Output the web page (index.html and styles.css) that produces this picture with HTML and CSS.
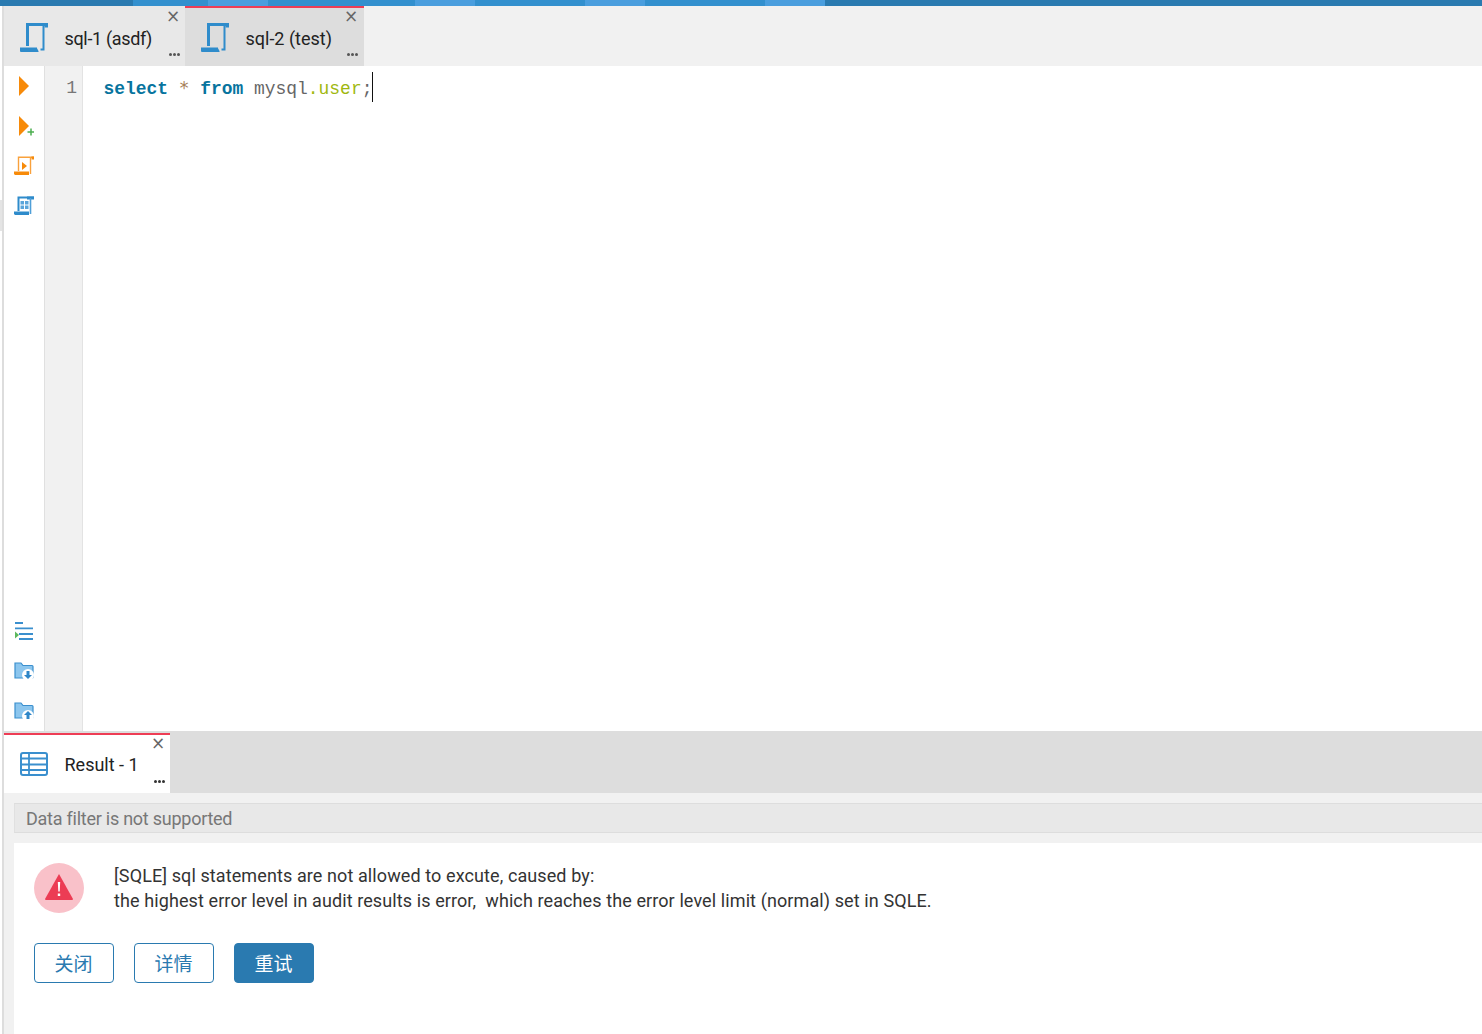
FILE: index.html
```html
<!DOCTYPE html>
<html lang="en">
<head>
<meta charset="utf-8">
<title>SQL</title>
<link rel="stylesheet" href="styles.css">
</head>
<body>
<svg class="defs" width="0" height="0">
  <symbol id="script" viewBox="0 0 28 30">
    <path d="M7.500 24V2.500H27" fill="none" stroke="currentColor" stroke-width="3"/>
    <path d="M24.500 1h3.500v4.500h-3.500z" fill="currentColor"/>
    <path d="M23.500 3v24.500h-3" fill="none" stroke="currentColor" stroke-width="2"/>
    <path d="M0 25.500h17v.8l1.500 2.700V30H1a1 1 0 0 1-1-1z" fill="currentColor"/>
  </symbol>
</svg>

<div class="topbar">
  <i class="seg dark"></i><i class="seg mid"></i><i class="seg light"></i><i class="seg mid"></i><i class="seg light"></i><i class="seg mid"></i><i class="seg light"></i><i class="seg mid"></i><i class="seg light"></i><i class="seg dark"></i>
</div>
<div class="edge-mark"></div>

<div class="app">
  <div class="tabs">
    <div class="tab tab-one">
      <svg class="tab-icon"><use href="#script"/></svg>
      <span class="tab-label">sql-1 (asdf)</span>
      <span class="close">×</span>
      <span class="more"><b></b><b></b><b></b></span>
    </div>
    <div class="tab tab-two">
      <svg class="tab-icon"><use href="#script"/></svg>
      <span class="tab-label">sql-2 (test)</span>
      <span class="close">×</span>
      <span class="more"><b></b><b></b><b></b></span>
    </div>
  </div>

  <div class="editor">
    <div class="tools">
      <div class="tool-group">
        <svg class="tool" viewBox="0 0 20 20"><path d="M5 0l10 10L5 20z" fill="#f78a09"/></svg>
        <svg class="tool" viewBox="0 0 20 20"><path d="M5 0l10 10L5 20z" fill="#f78a09"/><path d="M17 12.500v7M13.500 16h7" stroke="#4caf50" stroke-width="1.500" fill="none"/></svg>
        <svg class="tool" viewBox="0 0 20 20">
          <path d="M4.500 15V1.200H20" fill="none" stroke="#f9a13c" stroke-width="1.400"/>
          <path d="M17.500.5h2.700v3h-2.700z" fill="#f78a09"/>
          <path d="M16.500 2v16" fill="none" stroke="#f9a13c" stroke-width="1.400"/>
          <path d="M0 15.500h15v3.500H1l-1-1z" fill="#f78a09"/>
          <path d="M8 6l5 4-5 4z" fill="#f78a09"/>
        </svg>
        <svg class="tool" viewBox="0 0 20 20">
          <path d="M4.500 15V1.500H20" fill="none" stroke="#2e8bcb" stroke-width="2"/>
          <path d="M13 .5h7.200v3H13z" fill="#2e8bcb"/>
          <path d="M16.500 2v16" fill="none" stroke="#4f9fd8" stroke-width="1.600"/>
          <path d="M0 15.500h15v3.500H1l-1-1z" fill="#2e8bcb"/>
          <path d="M6.500 5h3.500v3.500H6.500zM11 5h3.500v3.500H11zM6.500 9.500h3.500v3.500H6.500zM11 9.500h3.500v3.500H11z" fill="#5aa5da"/>
        </svg>
      </div>
      <div class="tool-group">
        <svg class="tool" viewBox="0 0 20 20">
          <path d="M1 2h8M1 7.300h18M5 13h14M5 18h14" stroke="#3a8fce" stroke-width="1.800" fill="none"/>
          <path d="M1 10.500l4 3.500-4 3.500z" fill="#5cb85c"/>
        </svg>
        <svg class="tool" viewBox="0 0 20 20">
          <path d="M1 2h6l2 2.500h9a1 1 0 0 1 1 1V16a1 1 0 0 1-1 1H1z" fill="#8cc6ee" stroke="#3a8fce" stroke-width="1.200"/>
          <circle cx="14" cy="14" r="6" fill="#fff"/>
          <path d="M12.500 10h3v4H18l-4 4-4-4h2.500z" fill="#2e86c8"/>
        </svg>
        <svg class="tool" viewBox="0 0 20 20">
          <path d="M1 2h6l2 2.500h9a1 1 0 0 1 1 1V16a1 1 0 0 1-1 1H1z" fill="#8cc6ee" stroke="#3a8fce" stroke-width="1.200"/>
          <circle cx="14" cy="15" r="6" fill="#fff"/>
          <path d="M14 10l4 4h-2.500v4h-3v-4H10z" fill="#2e86c8"/>
        </svg>
      </div>
    </div>
    <div class="gutter">1</div>
    <div class="code"><span class="kw">select</span> <span class="op">*</span> <span class="kw">from</span> <span class="name">mysql</span><span class="field">.user</span><span class="name">;</span><span class="caret"></span></div>
  </div>

  <div class="result-tabs">
    <div class="result-tab">
      <svg class="result-icon" viewBox="0 0 28 24"><rect x="1" y="1" width="26" height="22" rx="2" fill="#fff" stroke="#3a8fce" stroke-width="2"/><path d="M1 6.500h26M1 12.500h26M1 18h26M9 1v22" stroke="#3a8fce" stroke-width="1.800" fill="none"/></svg>
      <span class="tab-label">Result - 1</span>
      <span class="close">×</span>
      <span class="more"><b></b><b></b><b></b></span>
    </div>
  </div>

  <div class="result-body">
    <div class="filter">Data filter is not supported</div>
    <div class="panel">
      <div class="message">
        <div class="alert">
          <svg viewBox="0 0 28 26" width="28" height="26"><path d="M14 0l14 25a1 1 0 0 1-1 1H1a1 1 0 0 1-1-1z" fill="#ec3c54"/><path d="M12.800 8h2.400l-.5 9.500h-1.400zM12.800 19.500h2.400V22h-2.400z" fill="#fff"/></svg>
        </div>
        <div class="text">
          <div>[SQLE] sql statements are not allowed to excute, caused by:</div>
          <div>the highest error level in audit results is error,&nbsp; which reaches the error level limit (normal) set in SQLE.</div>
        </div>
      </div>
      <div class="buttons">
        <button class="btn">关闭</button>
        <button class="btn">详情</button>
        <button class="btn primary">重试</button>
      </div>
    </div>
  </div>
</div>
</body>
</html>
```
FILE: styles.css
```css
* { box-sizing: border-box; }
html, body { margin: 0; height: 100%; overflow: hidden; }
body { width: 1482px; height: 1034px; background: #fff; display: flex; flex-direction: column; font-family: Roboto, "Noto Sans CJK SC", sans-serif; font-size: 18px; color: #222; position: relative; }
.defs { position: absolute; }
.topbar { height: 6px; flex: none; display: grid; grid-template-columns: 133px 75px 60px 147px 60px 110px 60px 120px 60px 1fr; }
.seg { display: block; }
.dark { background: #2a7ab0; }
.mid { background: #3390ce; }
.light { background: #4a9ede; }
.edge-mark { position: absolute; left: 0; top: 200px; width: 2px; height: 31px; background: #e4e4e4; }
.app { flex: 1; min-height: 0; margin-left: 2px; border-left: 2px solid #ddd; display: flex; flex-direction: column; }

.tabs { height: 60px; flex: none; display: flex; background: #f1f1f1; }
.tab { position: relative; height: 60px; display: flex; align-items: center; padding-left: 16px; }
.tab-one { width: 181px; background: #e8e8e8; }
.tab-two { width: 179px; background: #ddd; border-top: 2px solid #ee3d55; }
.tab-icon { width: 28px; height: 30px; color: #2f8ccb; flex: none; }
.tab-label { margin-left: 16.500px; white-space: nowrap; }
.tab-one .tab-label { margin-top: 4px; letter-spacing: -0.340px; }
.tab-two .tab-label { margin-top: 2px; }
.tab-one .tab-icon { margin-top: 2px; }
.close { position: absolute; right: 5px; top: 0; font: 17px/20px "DejaVu Sans", sans-serif; color: #666; width: 14px; text-align: center; }
.tab-two .close { top: -2px; right: 6px; }
.more { position: absolute; right: 5px; top: 47px; display: flex; gap: 1px; }
.tab-two .more { top: 45px; right: 6px; }
.more b { width: 3px; height: 3px; border-radius: 50%; background: #555; }

.editor { height: 665px; flex: none; display: flex; }
.tools { width: 41px; flex: none; border-right: 1px solid #e0e0e0; display: flex; flex-direction: column; justify-content: space-between; padding: 10px 0 0 10px; }
.tool-group { display: flex; flex-direction: column; gap: 20px; }
.tool { display: block; width: 20px; height: 20px; }
.tool-group + .tool-group { padding-bottom: 10px; }
.gutter { width: 38px; flex: none; background: #f1f1f1; border-right: 1px solid #e3e3e3; text-align: right; padding: 11px 5px 0 0; font: 18px/22px "Liberation Mono", monospace; color: #777; }
.code { flex: 1; padding: 10px 0 0 20.500px; font: 17.930px/22px "Liberation Mono", monospace; white-space: pre; color: #666; }
.kw { color: #07749e; font-weight: 700; }
.op { color: #a67f59; font-family: "DejaVu Sans Mono", monospace; font-size: 17.800px; }
.name { color: #666; }
.field { color: #a0b810; }
.caret { display: inline-block; width: 1px; height: 30px; margin: -4px 0; background: #111; vertical-align: -4px; }

.result-tabs { height: 62px; flex: none; background: #ddd; padding-top: 2px; display: flex; }
.result-tab { position: relative; width: 166px; height: 60px; background: #fff; border-top: 2px solid #ee3d55; display: flex; align-items: center; padding-left: 16px; }
.result-icon { width: 28px; height: 24px; flex: none; }
.result-tab .close { top: -2px; right: 5px; }
.result-tab .more { top: 45px; right: 5px; }
.result-tab .more b { background: #333; }

.result-body { flex: 1; min-height: 0; background: #f1f1f1; padding: 10px 0 0 10px; display: flex; flex-direction: column; }
.filter { height: 30px; flex: none; background: #e8e8e8; border-top: 1px solid #ddd; border-bottom: 1px solid #ddd; border-left: 1px solid #e0e0e0; padding-left: 11px; line-height: 29px; color: #777; letter-spacing: -0.250px; }
.panel { flex: 1; margin-top: 10px; background: #fff; padding: 20px 20px 0; }
.message { display: flex; gap: 30px; }
.alert { width: 50px; height: 50px; flex: none; border-radius: 50%; background: #f9c1c9; display: flex; align-items: center; justify-content: center; padding-bottom: 2px; }
.text { line-height: 25px; color: #333; font-size: 18px; letter-spacing: 0.100px; }
.buttons { display: flex; gap: 20px; margin-top: 30px; }
.btn { width: 80px; height: 40px; border: 1px solid #2a7ab0; border-radius: 4px; background: #fff; color: #2a7ab0; font-family: "Noto Sans CJK SC", sans-serif; font-size: 19px; font-weight: 400; padding: 0 1px 2px 0; }
.primary { background: #2a7ab0; color: #fff; }
```
